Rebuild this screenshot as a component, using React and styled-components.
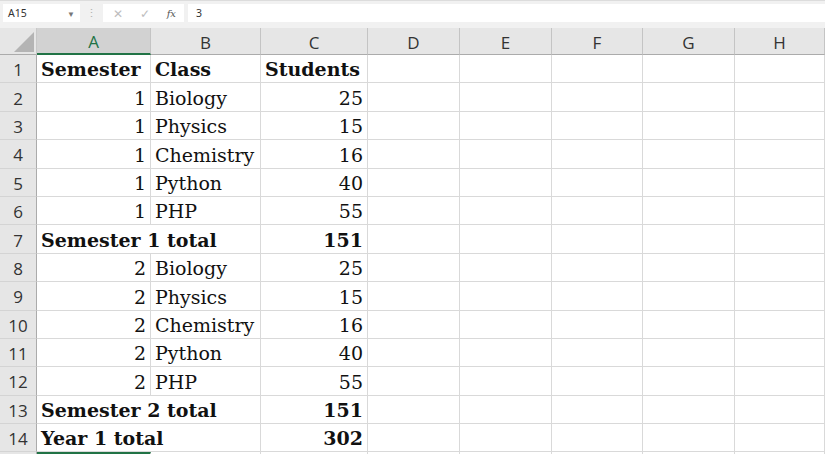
import React from 'react';
import styled, { createGlobalStyle } from 'styled-components';

const GlobalStyle = createGlobalStyle`
  html, body {
    margin: 0;
    padding: 0;
    background: #fff;
    overflow: hidden;
  }
  * {
    box-sizing: border-box;
  }
`;

const Window = styled.div`
  width: 825px;
  height: 454px;
  overflow: hidden;
  display: flex;
  flex-direction: column;
  background: #fff;
`;

const FormulaBar = styled.div`
  height: 28px;
  flex: none;
  display: flex;
  align-items: flex-start;
  padding: 3px 0 0 3px;
  background: #f1f1f1;
  border-top: 1px solid #dcdcdc;
  font-family: "Noto Sans", "Liberation Sans", sans-serif;
  font-size: 10.5px;
  color: #333;
`;

const NameBox = styled.div`
  width: 77px;
  height: 18px;
  background: #fff;
  display: flex;
  align-items: center;
  justify-content: space-between;
  padding: 0 5px 0 5px;
`;

const Caret = styled.span`
  font-size: 8px;
  color: #777;
`;

const Grip = styled.div`
  width: 23px;
  height: 18px;
  line-height: 18px;
  text-align: center;
  color: #b0b0b0;
  font-size: 11px;
`;

const FxBox = styled.div`
  width: 81px;
  height: 18px;
  background: #fff;
  display: flex;
  align-items: center;
  justify-content: space-between;
  padding: 0 8px 0 10px;
  color: #bdbdbd;
  font-size: 12px;
`;

const Fx = styled.span`
  font-family: "DejaVu Serif", serif;
  font-style: italic;
  font-size: 10px;
  color: #555;
`;

const FormulaInput = styled.div`
  flex: 1;
  height: 18px;
  margin-left: 4px;
  background: #fff;
  padding-left: 8px;
  display: flex;
  align-items: center;
`;

const Sheet = styled.div`
  display: grid;
  grid-template-columns: 37px 114px 110px 107px 92px 92px 91px 92px 1fr;
  grid-template-rows: 27px;
  grid-auto-rows: 28.4px;
`;

const Corner = styled.div`
  background: #e6e6e6;
  border-right: 1px solid #c8c8c8;
  border-bottom: 1px solid #ababab;
  display: flex;
  align-items: flex-end;
  justify-content: flex-end;
  padding: 0 2px 2px 0;
`;

const Triangle = styled.div`
  width: 0;
  height: 0;
  border-left: 20px solid transparent;
  border-bottom: 20px solid #b4b4b4;
`;

const ColHeader = styled.div`
  background: ${p => (p.$selected ? '#d2d2d2' : '#e6e6e6')};
  color: ${p => (p.$selected ? '#217346' : '#333')};
  border-right: 1px solid #c4c4c4;
  border-bottom: ${p => (p.$selected ? '2px solid #217346' : '1px solid #ababab')};
  display: flex;
  align-items: center;
  justify-content: center;
  padding-top: 2px;
  font-family: "Open Sans", "Noto Sans", sans-serif;
  font-size: 17px;
`;

const RowHeader = styled.div`
  background: #e6e6e6;
  color: #333;
  border-right: 1px solid #ababab;
  border-bottom: 1px solid #d4d4d4;
  display: flex;
  align-items: center;
  justify-content: center;
  padding-top: 2px;
  font-family: "Open Sans", "Noto Sans", sans-serif;
  font-size: 17px;
`;

const Cell = styled.div`
  grid-column: span ${p => p.$span || 1};
  border-right: 1px solid #d9d9d9;
  border-bottom: 1px solid #d9d9d9;
  border-top: ${p => (p.$active ? '2px solid #217346' : 'none')};
  display: flex;
  align-items: flex-end;
  justify-content: ${p => (p.$right ? 'flex-end' : 'flex-start')};
  padding: 0 4px 2px 4px;
  font-family: "DejaVu Serif", "Liberation Serif", serif;
  font-size: 19px;
  font-weight: ${p => (p.$bold ? 700 : 400)};
  color: #111;
  white-space: nowrap;
  overflow: visible;
`;

const columns = ['A', 'B', 'C', 'D', 'E', 'F', 'G', 'H'];

const rows = [
  { cells: [{ t: 'Semester', bold: true }, { t: 'Class', bold: true }, { t: 'Students', bold: true }] },
  { cells: [{ t: '1', right: true }, { t: 'Biology' }, { t: '25', right: true }] },
  { cells: [{ t: '1', right: true }, { t: 'Physics' }, { t: '15', right: true }] },
  { cells: [{ t: '1', right: true }, { t: 'Chemistry' }, { t: '16', right: true }] },
  { cells: [{ t: '1', right: true }, { t: 'Python' }, { t: '40', right: true }] },
  { cells: [{ t: '1', right: true }, { t: 'PHP' }, { t: '55', right: true }] },
  { cells: [{ t: 'Semester 1 total', bold: true, span: 2 }, { t: '151', bold: true, right: true }] },
  { cells: [{ t: '2', right: true }, { t: 'Biology' }, { t: '25', right: true }] },
  { cells: [{ t: '2', right: true }, { t: 'Physics' }, { t: '15', right: true }] },
  { cells: [{ t: '2', right: true }, { t: 'Chemistry' }, { t: '16', right: true }] },
  { cells: [{ t: '2', right: true }, { t: 'Python' }, { t: '40', right: true }] },
  { cells: [{ t: '2', right: true }, { t: 'PHP' }, { t: '55', right: true }] },
  { cells: [{ t: 'Semester 2 total', bold: true, span: 2 }, { t: '151', bold: true, right: true }] },
  { cells: [{ t: 'Year 1 total', bold: true, span: 2 }, { t: '302', bold: true, right: true }] },
  // row 15 holds the active cell A15; only its top edge shows in the window
  { cells: [{ t: '', active: true }], hidden: true },
];

function App() {
  return (
    <>
      <GlobalStyle />
      <Window>
        <FormulaBar>
          <NameBox>
            <span>A15</span>
            <Caret>▼</Caret>
          </NameBox>
          <Grip>⋮</Grip>
          <FxBox>
            <span>✕</span>
            <span>✓</span>
            <Fx>fx</Fx>
          </FxBox>
          <FormulaInput>3</FormulaInput>
        </FormulaBar>

        <Sheet>
          <Corner>
            <Triangle />
          </Corner>
          {columns.map(c => (
            <ColHeader key={c} $selected={c === 'A'}>{c}</ColHeader>
          ))}

          {rows.map((row, i) => {
            const used = row.cells.reduce((n, c) => n + (c.span || 1), 0);
            return (
              <React.Fragment key={i}>
                <RowHeader>{row.hidden ? '' : i + 1}</RowHeader>
                {row.cells.map((c, j) => (
                  <Cell key={j} $bold={c.bold} $right={c.right} $span={c.span} $active={c.active}>
                    {c.t}
                  </Cell>
                ))}
                {[...Array(columns.length - used).keys()].map(k => (
                  <Cell key={'e' + k} />
                ))}
              </React.Fragment>
            );
          })}
        </Sheet>
      </Window>
    </>
  );
}

export default App;
